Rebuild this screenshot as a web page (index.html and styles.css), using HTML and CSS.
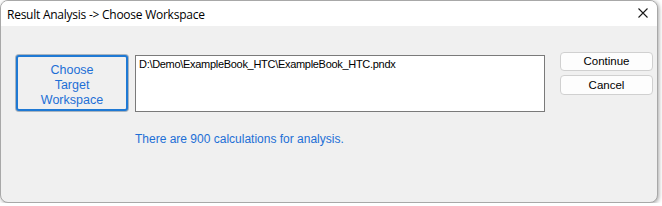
FILE: index.html
```html
<!DOCTYPE html>
<html>
<head>
    <title>Result Analysis -> Choose Workspace</title>
    <link rel="stylesheet" href="styles.css">
</head>
<body>
    <div class="window">
        <div class="titlebar">
            <span class="title">Result Analysis -&gt; Choose Workspace</span>
            <svg class="close" width="10" height="10" viewBox="0 0 10 10">
                <path d="M0.5 0.5 L9.5 9.5 M9.5 0.5 L0.5 9.5" stroke="#1a1a1a" stroke-width="1.1" fill="none"/>
            </svg>
        </div>

        <div class="content">
            <button class="choose-btn">Choose<br>Target<br>Workspace</button>

            <div class="middle">
                <div class="path-box">D:\Demo\ExampleBook_HTC\ExampleBook_HTC.pndx</div>
                <div class="status">There are 900 calculations for analysis.</div>
            </div>

            <div class="actions">
                <button class="action-btn">Continue</button>
                <button class="action-btn">Cancel</button>
            </div>
        </div>
    </div>
</body>
</html>
```

FILE: styles.css
```css
body {
    margin: 0;
    background-color: #ffffff;
    font-family: "Liberation Sans", Arial, sans-serif;
}

.window {
    width: 656px;
    height: 201px;
    border: 1px solid #a8a8a8;
    border-radius: 8px;
    background-color: #f0f0f0;
    box-shadow: 1px 1px 4px rgba(0, 0, 0, 0.35);
    overflow: hidden;
}

.titlebar {
    height: 25px;
    background-color: #ffffff;
    display: flex;
    align-items: center;
    justify-content: space-between;
    padding: 0 8px 0 6px;
}

.title {
    font-family: "Segoe UI", "Open Sans", sans-serif;
    font-size: 12px;
    letter-spacing: -0.25px;
    color: #000000;
    margin-top: 1px;
}

.close {
    margin-top: -2px;
    margin-right: 1px;
}

.content {
    display: flex;
    align-items: flex-start;
    padding: 26px 0 0 15px;
}

.choose-btn {
    width: 112px;
    height: 56px;
    margin-top: 3px;
    padding: 4px 0 0 0;
    border: 2px solid #1f79d4;
    border-radius: 3px;
    box-shadow: 0 0 0 1px #a9b4bf;
    background-color: #f0f0f0;
    color: #1d6fd6;
    font-family: "Liberation Sans", Arial, sans-serif;
    font-size: 12.5px;
    line-height: 15px;
    text-align: center;
}

.middle {
    margin: 3px 0 0 7px;
    width: 410px;
}

.path-box {
    border: 1px solid #7a7a7a;
    background-color: #ffffff;
    padding: 2px 3px;
    box-sizing: border-box;
    height: 57px;
    font-size: 11px;
    letter-spacing: -0.3px;
    line-height: 13px;
    color: #000000;
}

.status {
    margin-top: 20px;
    font-size: 12px;
    color: #1d6fd6;
}

.actions {
    display: flex;
    flex-direction: column;
    gap: 4px;
    margin-left: 15px;
}

.action-btn {
    width: 93px;
    height: 19px;
    padding: 0;
    border: 1px solid #d0d0d0;
    border-radius: 4px;
    background-color: #fdfdfd;
    color: #000000;
    font-family: "Liberation Sans", Arial, sans-serif;
    font-size: 11.5px;
    line-height: 17px;
}

.action-btn + .action-btn {
    height: 20px;
}
```
